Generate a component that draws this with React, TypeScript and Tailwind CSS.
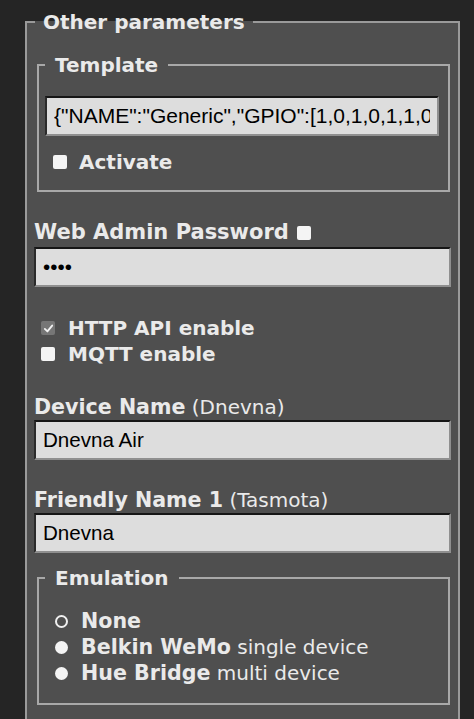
import React from "react";

const font = "font-['DejaVu_Sans',Verdana,sans-serif]";
const inputCls =
  "block h-[40px] w-full border-2 border-t-[#161616] border-l-[#2a2a2a] border-r-[#8f8f8f] border-b-[#8f8f8f] bg-[#dddddd] px-[7px] font-['Liberation_Sans',Arial,sans-serif] text-[20.6px] text-black outline-none";

function Box({ checked }: { checked?: boolean }) {
  return checked ? (
    <span className="inline-flex h-[14px] w-[14px] items-center justify-center rounded-[2px] bg-[#767676]">
      <svg width="11" height="11" viewBox="0 0 12 12" fill="none">
        <path d="M2 6.5 L4.8 9.2 L10 2.8" stroke="#f2f2f2" strokeWidth="2" strokeLinecap="round" strokeLinejoin="round" />
      </svg>
    </span>
  ) : (
    <span className="inline-block h-[14px] w-[14px] rounded-[2px] bg-[#f4f4f4]" />
  );
}

function Radio({ on }: { on?: boolean }) {
  return on ? (
    <span className="inline-block h-[13px] w-[13px] rounded-full border-2 border-[#f0f0f0] bg-[#4f4f4f]" />
  ) : (
    <span className="inline-block h-[13px] w-[13px] rounded-full bg-[#f4f4f4]" />
  );
}

function Legend({ children }: { children: React.ReactNode }) {
  return <legend className="px-[10px] text-[20px] font-bold leading-[26px]">{children}</legend>;
}

export default function App() {
  return (
    <div className={`min-h-screen bg-[#252525] pl-[25px] pr-[14px] text-[#eaeaea] ${font}`}>
      <div className="h-[9px]" />
      <fieldset className="border-2 border-[#9a9a9a] bg-[#4f4f4f] px-[7px] pb-[40px]">
        <legend className="ml-[1px] px-[8px] text-[20px] font-bold leading-[26px]">Other parameters</legend>

        <fieldset className="mt-[17px] ml-[3px] mr-[1px] border-2 border-[#a8a8a8] pl-[6px] pr-[9px] pb-[15px]">
          <Legend>Template</Legend>
          <input
            className={`mt-[18px] ${inputCls} text-[21px]`}
            readOnly
            value={'{"NAME":"Generic","GPIO":[1,0,1,0,1,1,0,0,0,0,0,0,0,0],"FLAG":0,"BASE":18}'}
          />
          <div className="mt-[13px] flex h-[26px] items-center pl-[8px] text-[20px] font-bold">
            <Box />
            <span className="ml-[12px]">Activate</span>
          </div>
        </fieldset>

        <div className="mt-[28px] flex h-[26px] items-center text-[21px] font-bold">
          <span>Web Admin Password</span>
          <span className="ml-[8px] flex"><Box /></span>
        </div>
        <input type="password" className={`mt-[1px] ${inputCls}`} readOnly value="abcd" />

        <div className="mt-[28px] pl-[7px] text-[20px] font-bold">
          <div className="flex h-[26px] items-center">
            <Box checked />
            <span className="ml-[13px]">HTTP API enable</span>
          </div>
          <div className="flex h-[26px] items-center">
            <Box />
            <span className="ml-[13px]">MQTT enable</span>
          </div>
        </div>

        <div className="mt-[27px] h-[26px] text-[20px] leading-[26px]">
          <b className="text-[20.6px]">Device Name</b> (Dnevna)
        </div>
        <input className={inputCls} readOnly value="Dnevna Air" />

        <div className="mt-[27px] h-[26px] text-[20px] leading-[26px]">
          <b className="text-[20.6px]">Friendly Name 1</b> (Tasmota)
        </div>
        <input className={inputCls} readOnly value="Dnevna" />

        <fieldset className="mt-[12px] ml-[3px] mr-[1px] border-2 border-[#a8a8a8] pl-[6px] pb-[17px]">
          <Legend>Emulation</Legend>
          <div className="mt-[17px] pl-[10px] text-[20px] leading-[26px]">
            <div className="flex h-[26px] items-center">
              <Radio on />
              <b className="ml-[13px] text-[20.6px]">None</b>
            </div>
            <div className="flex h-[26px] items-center">
              <Radio />
              <span className="ml-[13px]"><b className="text-[20.6px]">Belkin WeMo</b> single device</span>
            </div>
            <div className="flex h-[26px] items-center">
              <Radio />
              <span className="ml-[13px]"><b className="text-[20.6px]">Hue Bridge</b> multi device</span>
            </div>
          </div>
        </fieldset>
      </fieldset>
    </div>
  );
}
